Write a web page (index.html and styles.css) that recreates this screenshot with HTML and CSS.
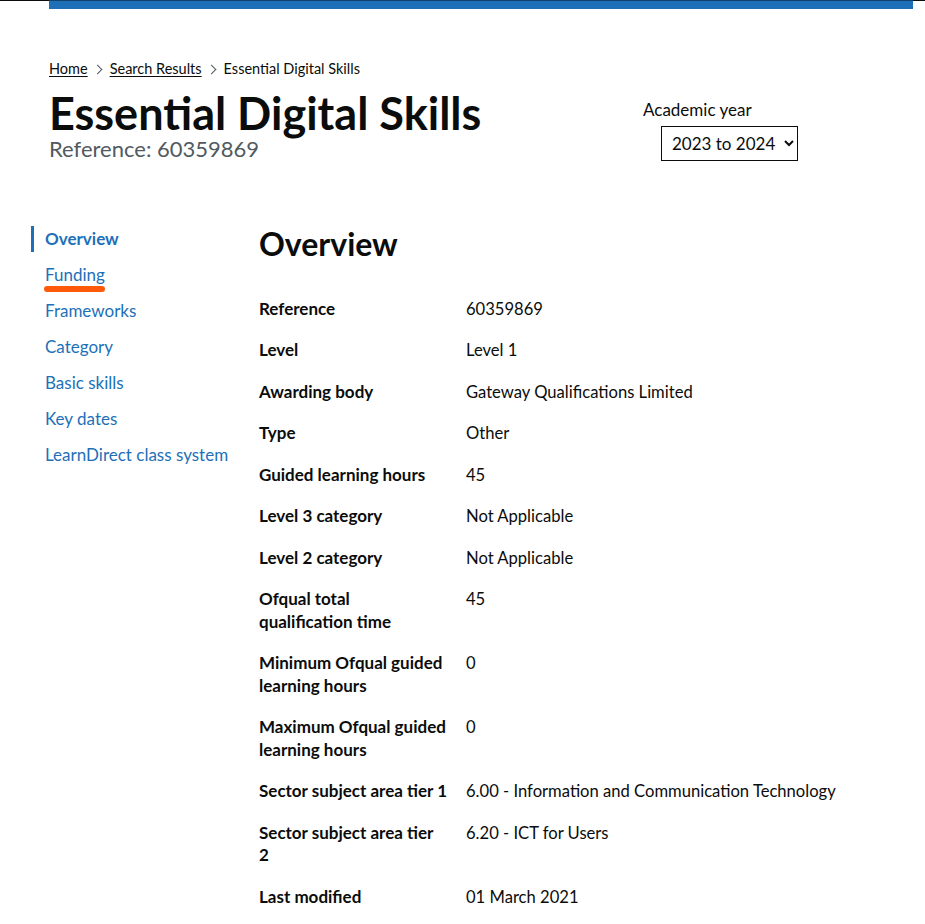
FILE: index.html
```html
<!DOCTYPE html>
<html lang="en">
<head>
<meta charset="utf-8">
<title>Essential Digital Skills</title>
<link rel="stylesheet" href="styles.css">
</head>
<body>
<div class="topline"></div>
<div class="page">
  <div class="bluebar"></div>

  <nav class="breadcrumbs">
    <a href="#">Home</a>
    <span class="sep"></span>
    <a href="#">Search Results</a>
    <span class="sep"></span>
    <span class="current">Essential Digital Skills</span>
  </nav>

  <div class="header">
    <div class="title-block">
      <h1 class="title">Essential Digital Skills</h1>
      <p class="caption">Reference: 60359869</p>
    </div>
    <div class="year-block">
      <label class="year-label" for="year">Academic year</label>
      <div class="select-wrap">
        <select id="year" class="year-select">
          <option>2023 to 2024</option>
        </select>
      </div>
    </div>
  </div>

  <div class="content">
    <ul class="side-nav">
      <li class="active"><a href="#">Overview</a></li>
      <li class="marked"><a href="#">Funding</a><span class="mark"></span></li>
      <li><a href="#">Frameworks</a></li>
      <li><a href="#">Category</a></li>
      <li><a href="#">Basic skills</a></li>
      <li><a href="#">Key dates</a></li>
      <li><a href="#">LearnDirect class system</a></li>
    </ul>

    <main class="main">
      <h2 class="heading">Overview</h2>
      <dl class="summary">
        <div class="row"><dt>Reference</dt><dd>60359869</dd></div>
        <div class="row"><dt>Level</dt><dd>Level 1</dd></div>
        <div class="row"><dt>Awarding body</dt><dd>Gateway Qualifications Limited</dd></div>
        <div class="row"><dt>Type</dt><dd>Other</dd></div>
        <div class="row"><dt>Guided learning hours</dt><dd>45</dd></div>
        <div class="row"><dt>Level 3 category</dt><dd>Not Applicable</dd></div>
        <div class="row"><dt>Level 2 category</dt><dd>Not Applicable</dd></div>
        <div class="row"><dt>Ofqual total<br>qualification time</dt><dd>45</dd></div>
        <div class="row"><dt>Minimum Ofqual guided learning hours</dt><dd>0</dd></div>
        <div class="row"><dt>Maximum Ofqual guided learning hours</dt><dd>0</dd></div>
        <div class="row"><dt>Sector subject area tier 1</dt><dd>6.00 - Information and Communication Technology</dd></div>
        <div class="row"><dt>Sector subject area tier<br>2</dt><dd>6.20 - ICT for Users</dd></div>
        <div class="row"><dt>Last modified</dt><dd>01 March 2021</dd></div>
      </dl>
    </main>
  </div>
</div>
</body>
</html>
```
FILE: styles.css
```css
* { box-sizing: border-box; }

body {
  margin: 0;
  background: #ffffff;
  color: #0b0c0c;
  font-family: Lato, "Liberation Sans", Arial, sans-serif;
}

.topline {
  height: 1px;
  background: #0b0c0c;
}

.page {
  padding: 0 12px 0 49px;
}

.bluebar {
  height: 9px;
  margin-top: -1px;
  background: #1d70b8;
  border-top: 1px solid #12416c;
}

/* Breadcrumbs */
.breadcrumbs {
  display: flex;
  align-items: center;
  margin-top: 50px;
  height: 20px;
  font-size: 14.5px;
  line-height: 20px;
}
.breadcrumbs a {
  color: #0b0c0c;
  text-decoration: underline;
  text-underline-offset: 2px;
  text-decoration-thickness: 1px;
}
.breadcrumbs .sep {
  display: inline-block;
  width: 7px;
  height: 7px;
  margin: 0 9px 0 6px;
  border-top: 1px solid #505a5f;
  border-right: 1px solid #505a5f;
  transform: rotate(45deg);
}
.breadcrumbs .current {
  color: #0b0c0c;
}

/* Header */
.header {
  display: flex;
  justify-content: space-between;
  margin-top: 11px;
}
.title {
  margin: 0;
  font-size: 45px;
  font-weight: 700;
  line-height: 46px;
}
.caption {
  margin: 0;
  font-size: 22px;
  line-height: 26px;
  color: #505a5f;
}
.year-block {
  width: 270px;
  padding-top: 9px;
}
.year-label {
  display: block;
  font-size: 17px;
  line-height: 22px;
}
.select-wrap {
  padding-left: 18px;
  margin-top: 5px;
}
.year-select {
  width: 137px;
  height: 35px;
  padding: 0 4px 0 6px;
  font-family: Lato, "Liberation Sans", Arial, sans-serif;
  font-size: 17px;
  color: #0b0c0c;
  background: #ffffff;
  border: 1px solid #0b0c0c;
  border-radius: 0;
}

/* Content */
.content {
  display: flex;
  margin-top: 42px;
}

.side-nav {
  list-style: none;
  margin: 22px 0 0 -18px;
  padding: 0;
  width: 228px;
  flex-shrink: 0;
}
.side-nav li {
  position: relative;
  height: 36px;
  padding-left: 14px;
  font-size: 17px;
  line-height: 26px;
}
.side-nav a {
  color: #1d70b8;
  text-decoration: none;
}
.side-nav li.active {
  border-left: 3px solid #1d70b8;
  padding-left: 11px;
  height: 26px;
  margin-bottom: 10px;
}
.side-nav li.active a {
  font-weight: 700;
}
.side-nav .mark {
  position: absolute;
  left: 13px;
  top: 24px;
  width: 61px;
  height: 6px;
  border-radius: 3px;
  background: #ff5a0a;
}

.main {
  flex: 1;
}
.heading {
  margin: 20px 0 24px;
  font-size: 32px;
  line-height: 40px;
  font-weight: 700;
}

.summary {
  margin: 0;
}
.row {
  display: flex;
  padding: 9.5px 0;
}
.row dt {
  width: 207px;
  flex-shrink: 0;
  padding-right: 12px;
  margin: 0;
  font-size: 17px;
  line-height: 22.5px;
  font-weight: 700;
}
.row dd {
  margin: 0;
  font-size: 16.6px;
  line-height: 22.5px;
}
```
